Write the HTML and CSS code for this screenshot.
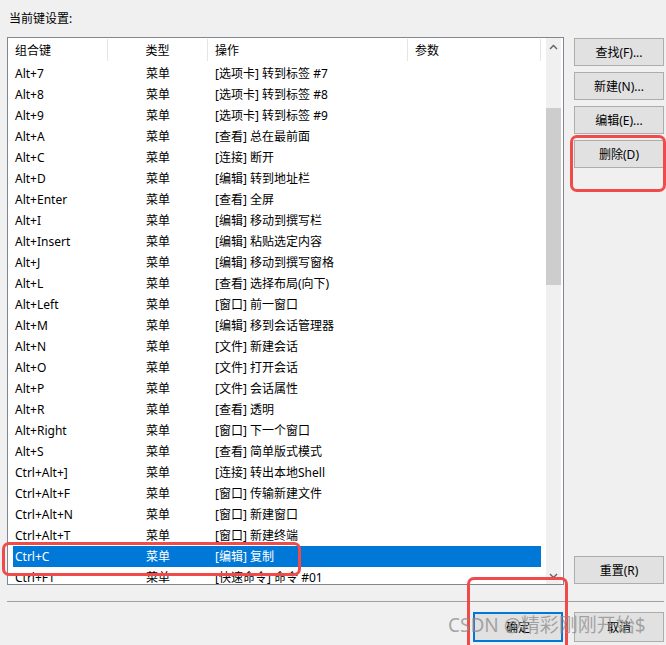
FILE: index.html
```html
<!DOCTYPE html>
<html lang="zh-CN">
<head>
<meta charset="utf-8">
<title>当前键设置</title>
<link rel="stylesheet" href="styles.css">
</head>
<body>
<div class="dialog">
  <div class="label">当前键设置:</div>
  <div class="main">
    <div class="listbox">
      <div class="list">
        <div class="header">
          <div class="hc c1">组合键</div>
          <div class="hc c2">类型</div>
          <div class="hc c3">操作</div>
          <div class="hc c4">参数</div>
        </div>
        <div class="row"><span class="c1">Alt+7</span><span class="c2">菜单</span><span class="c3">[选项卡] 转到标签 #7</span><span class="c4"></span></div>
        <div class="row"><span class="c1">Alt+8</span><span class="c2">菜单</span><span class="c3">[选项卡] 转到标签 #8</span><span class="c4"></span></div>
        <div class="row"><span class="c1">Alt+9</span><span class="c2">菜单</span><span class="c3">[选项卡] 转到标签 #9</span><span class="c4"></span></div>
        <div class="row"><span class="c1">Alt+A</span><span class="c2">菜单</span><span class="c3">[查看] 总在最前面</span><span class="c4"></span></div>
        <div class="row"><span class="c1">Alt+C</span><span class="c2">菜单</span><span class="c3">[连接] 断开</span><span class="c4"></span></div>
        <div class="row"><span class="c1">Alt+D</span><span class="c2">菜单</span><span class="c3">[编辑] 转到地址栏</span><span class="c4"></span></div>
        <div class="row"><span class="c1">Alt+Enter</span><span class="c2">菜单</span><span class="c3">[查看] 全屏</span><span class="c4"></span></div>
        <div class="row"><span class="c1">Alt+I</span><span class="c2">菜单</span><span class="c3">[编辑] 移动到撰写栏</span><span class="c4"></span></div>
        <div class="row"><span class="c1">Alt+Insert</span><span class="c2">菜单</span><span class="c3">[编辑] 粘贴选定内容</span><span class="c4"></span></div>
        <div class="row"><span class="c1">Alt+J</span><span class="c2">菜单</span><span class="c3">[编辑] 移动到撰写窗格</span><span class="c4"></span></div>
        <div class="row"><span class="c1">Alt+L</span><span class="c2">菜单</span><span class="c3">[查看] 选择布局(向下)</span><span class="c4"></span></div>
        <div class="row"><span class="c1">Alt+Left</span><span class="c2">菜单</span><span class="c3">[窗口] 前一窗口</span><span class="c4"></span></div>
        <div class="row"><span class="c1">Alt+M</span><span class="c2">菜单</span><span class="c3">[编辑] 移到会话管理器</span><span class="c4"></span></div>
        <div class="row"><span class="c1">Alt+N</span><span class="c2">菜单</span><span class="c3">[文件] 新建会话</span><span class="c4"></span></div>
        <div class="row"><span class="c1">Alt+O</span><span class="c2">菜单</span><span class="c3">[文件] 打开会话</span><span class="c4"></span></div>
        <div class="row"><span class="c1">Alt+P</span><span class="c2">菜单</span><span class="c3">[文件] 会话属性</span><span class="c4"></span></div>
        <div class="row"><span class="c1">Alt+R</span><span class="c2">菜单</span><span class="c3">[查看] 透明</span><span class="c4"></span></div>
        <div class="row"><span class="c1">Alt+Right</span><span class="c2">菜单</span><span class="c3">[窗口] 下一个窗口</span><span class="c4"></span></div>
        <div class="row"><span class="c1">Alt+S</span><span class="c2">菜单</span><span class="c3">[查看] 简单版式模式</span><span class="c4"></span></div>
        <div class="row"><span class="c1">Ctrl+Alt+]</span><span class="c2">菜单</span><span class="c3">[连接] 转出本地Shell</span><span class="c4"></span></div>
        <div class="row"><span class="c1">Ctrl+Alt+F</span><span class="c2">菜单</span><span class="c3">[窗口] 传输新建文件</span><span class="c4"></span></div>
        <div class="row"><span class="c1">Ctrl+Alt+N</span><span class="c2">菜单</span><span class="c3">[窗口] 新建窗口</span><span class="c4"></span></div>
        <div class="row"><span class="c1">Ctrl+Alt+T</span><span class="c2">菜单</span><span class="c3">[窗口] 新建终端</span><span class="c4"></span></div>
        <div class="row selected"><span class="c1">Ctrl+C</span><span class="c2">菜单</span><span class="c3">[编辑] 复制</span><span class="c4"></span></div>
        <div class="row"><span class="c1">Ctrl+F1</span><span class="c2">菜单</span><span class="c3">[快速命令] 命令 #01</span><span class="c4"></span></div>
      </div>
      <div class="scrollbar">
        <div class="arrow">
          <svg width="9" height="6" viewBox="0 0 9 6"><path d="M1 5 L4.5 1.5 L8 5" fill="none" stroke="#606060" stroke-width="1.4"/></svg>
        </div>
        <div class="track">
          <div class="thumb"></div>
        </div>
        <div class="arrow">
          <svg width="9" height="6" viewBox="0 0 9 6"><path d="M1 1 L4.5 4.5 L8 1" fill="none" stroke="#606060" stroke-width="1.4"/></svg>
        </div>
      </div>
    </div>
    <div class="side">
      <button class="btn">查找(F)...</button>
      <button class="btn">新建(N)...</button>
      <button class="btn">编辑(E)...</button>
      <button class="btn">删除(D)</button>
      <button class="btn reset">重置(R)</button>
    </div>
  </div>
  <div class="separator"></div>
  <div class="footer">
    <button class="btn default">确定</button>
    <button class="btn">取消</button>
  </div>
</div>
<div class="mark mark-delete"></div>
<div class="mark mark-row"></div>
<div class="mark mark-ok"></div>
<div class="watermark">CSDN @精彩刚刚开始$</div>
</body>
</html>
```

FILE: styles.css
```css
html, body {
  margin: 0;
  padding: 0;
  background: #f0f0f0;
  width: 666px;
  height: 645px;
  overflow: hidden;
}

body {
  position: relative;
  font-family: "Noto Sans", "Noto Sans CJK SC", sans-serif;
  font-size: 12px;
  color: #000;
}

.dialog {
  padding-left: 7px;
  width: 657px;
}

.label {
  height: 37px;
  line-height: 38px;
  padding-left: 2px;
  box-sizing: border-box;
}

.main {
  display: flex;
  gap: 10px;
  height: 548px;
}

.listbox {
  width: 557px;
  height: 548px;
  box-sizing: border-box;
  border: 1px solid #82878f;
  background: #fff;
  display: flex;
}

.list {
  width: 538px;
  height: 546px;
  overflow: hidden;
}

.header {
  display: grid;
  grid-template-columns: 95px 100px 200px 133px;
  margin-left: 5px;
  height: 25px;
  align-items: stretch;
}

.hc {
  display: flex;
  align-items: center;
  border-right: 1px solid #e5e5e5;
  margin: 1px 0 2px;
}

.header .c1 { padding-left: 2px; }
.header .c2 { justify-content: center; }
.header .c3 { padding-left: 7px; }
.header .c4 { padding-left: 7px; }

.row {
  display: grid;
  grid-template-columns: 95px 100px 200px 133px;
  margin-left: 5px;
  width: 528px;
  height: 21px;
  line-height: 21px;
  white-space: nowrap;
}

.row .c1 { padding-left: 2px; }
.row .c2 { text-align: center; }
.row .c3 { padding-left: 7px; }

.row.selected {
  background: #0078d7;
  color: #fff;
}

.scrollbar {
  width: 15px;
  margin-left: 0;
  margin-right: 2px;
  background: #f0f0f0;
  display: flex;
  flex-direction: column;
}

.arrow {
  height: 17px;
  display: flex;
  align-items: center;
  justify-content: center;
}

.track {
  flex: 1;
  padding-top: 53px;
}

.thumb {
  height: 177px;
  background: #cdcdcd;
}

.side {
  width: 90px;
  display: flex;
  flex-direction: column;
  gap: 6px;
  padding-top: 1px;
  padding-bottom: 1px;
  box-sizing: border-box;
}

.btn {
  width: 90px;
  height: 28px;
  box-sizing: border-box;
  background: #e1e1e1;
  border: 1px solid #adadad;
  font-family: "Noto Sans", "Noto Sans CJK SC", sans-serif;
  font-size: 12px;
  color: #000;
  padding: 0;
  margin: 0;
}

.btn.reset {
  margin-top: auto;
}

.separator {
  margin-top: 16px;
  height: 1px;
  width: 657px;
  background: #a0a0a0;
}

.footer {
  display: flex;
  justify-content: flex-end;
  gap: 11px;
  padding-top: 10px;
  width: 657px;
}

.footer .btn {
  height: 30px;
}

.btn.default {
  border: 2px solid #0078d7;
}

.mark {
  position: absolute;
  border: 3px solid #f04a4a;
  border-radius: 7px;
  box-sizing: border-box;
}

.mark-delete {
  left: 570px;
  top: 135px;
  width: 96px;
  height: 57px;
}

.mark-row {
  left: 2px;
  top: 542px;
  width: 299px;
  height: 34px;
}

.mark-ok {
  left: 467px;
  top: 577px;
  width: 101px;
  height: 80px;
}

.watermark {
  position: absolute;
  left: 448px;
  top: 613px;
  font-family: "Noto Sans", "Noto Sans CJK SC", sans-serif;
  font-size: 19px;
  line-height: 24px;
  color: rgba(140, 140, 140, 0.75);
  white-space: nowrap;
}
```
